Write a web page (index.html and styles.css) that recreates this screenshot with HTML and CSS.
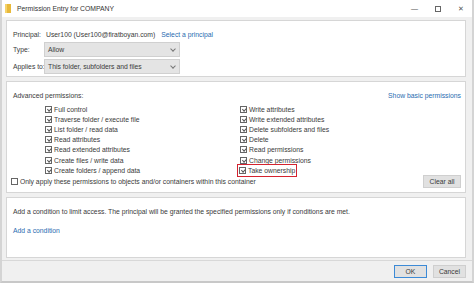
FILE: index.html
```html
<!DOCTYPE html>
<html lang="en">
  <head>
    <link rel="stylesheet" href="styles.css">
    <title>Permission Entry for COMPANY</title>
  </head>
  <body>
    <div class="window">
      <div class="titlebar">
        <svg class="folder" width="6" height="9" viewBox="0 0 6 9">
          <rect x="0" y="0" width="6" height="9" fill="#e8b93a" />
          <rect x="0" y="0" width="2" height="9" fill="#f5d36b" />
        </svg>
        <span class="title">Permission Entry for COMPANY</span>
        <div class="controls">
          <span class="ctl">&#8212;</span>
          <span class="ctl"><span class="max"></span></span>
          <span class="ctl">&#10005;</span>
        </div>
      </div>

      <div class="content">
        <div class="panel top-panel">
          <div class="field-row">
            <span class="label">Principal:</span>
            <span class="value">User100 (User100@firatboyan.com)</span>
            <a class="link">Select a principal</a>
          </div>
          <div class="field-row">
            <span class="label">Type:</span>
            <div class="select">Allow<span class="chev"></span></div>
          </div>
          <div class="field-row">
            <span class="label">Applies to:</span>
            <div class="select">This folder, subfolders and files<span class="chev"></span></div>
          </div>
        </div>

        <div class="panel perm-panel">
          <div class="perm-head">
            <span>Advanced permissions:</span>
            <a class="link">Show basic permissions</a>
          </div>
          <div class="perm-cols">
            <div class="perm-col left-col">
              <div class="check"><span class="box on"></span>Full control</div>
              <div class="check"><span class="box on"></span>Traverse folder / execute file</div>
              <div class="check"><span class="box on"></span>List folder / read data</div>
              <div class="check"><span class="box on"></span>Read attributes</div>
              <div class="check"><span class="box on"></span>Read extended attributes</div>
              <div class="check"><span class="box on"></span>Create files / write data</div>
              <div class="check"><span class="box on"></span>Create folders / append data</div>
            </div>
            <div class="perm-col right-col">
              <div class="check"><span class="box on"></span>Write attributes</div>
              <div class="check"><span class="box on"></span>Write extended attributes</div>
              <div class="check"><span class="box on"></span>Delete subfolders and files</div>
              <div class="check"><span class="box on"></span>Delete</div>
              <div class="check"><span class="box on"></span>Read permissions</div>
              <div class="check"><span class="box on"></span>Change permissions</div>
              <div class="check marked"><span class="box on"></span>Take ownership</div>
            </div>
          </div>
          <div class="perm-foot">
            <div class="check"><span class="box"></span>Only apply these permissions to objects and/or containers within this container</div>
            <div class="btn">Clear all</div>
          </div>
        </div>

        <div class="panel cond-panel">
          <p class="cond-text">Add a condition to limit access. The principal will be granted the specified permissions only if conditions are met.</p>
          <a class="link">Add a condition</a>
        </div>
      </div>

      <div class="footer">
        <div class="btn default">OK</div>
        <div class="btn">Cancel</div>
      </div>
    </div>
  </body>
</html>
```

FILE: styles.css
```css
html, body {
  margin: 0;
  padding: 0;
}
body {
  width: 474px;
  height: 283px;
  overflow: hidden;
  background: #f0f0f0;
  font-family: "Liberation Sans", Arial, sans-serif;
  font-size: 6.8px;
  color: #3a3a3a;
}
.window {
  height: 281px;
  border-left: 2px solid #d4d4d4;
  border-right: 2px solid #d4d4d4;
  border-bottom: 2px solid #c8c8c8;
  display: flex;
  flex-direction: column;
}
.titlebar {
  height: 17px;
  background: #fff;
  display: flex;
  align-items: center;
  padding-left: 3px;
}
.folder {
  margin-right: 6px;
}
.title {
  color: #333;
}
.controls {
  margin-left: auto;
  display: flex;
  height: 100%;
}
.ctl {
  width: 23px;
  display: flex;
  align-items: center;
  justify-content: center;
  color: #555;
  font-size: 7px;
}
.max {
  width: 6px;
  height: 6px;
  border: 1px solid #666;
  box-sizing: border-box;
}

.content {
  padding: 3px 6px 0 4px;
  display: flex;
  flex-direction: column;
  gap: 4px;
}
.panel {
  background: #fff;
  border: 1px solid #d6d6d6;
}
.top-panel {
  height: 57px;
  box-sizing: border-box;
  padding: 7px 0 0 6px;
  display: flex;
  flex-direction: column;
  gap: 2px;
}
.field-row {
  display: flex;
  align-items: center;
  min-height: 12px;
}
.label {
  width: 31px;
  flex: none;
  white-space: nowrap;
}
.value {
  margin-left: 2px;
  margin-right: 6px;
}
.link {
  color: #2b6cb0;
}
.select {
  width: 136px;
  height: 15px;
  box-sizing: border-box;
  background: #e4e4e4;
  border: 1px solid #d0d0d0;
  display: flex;
  align-items: center;
  padding-left: 3px;
  position: relative;
}
.chev {
  position: absolute;
  right: 4px;
  top: 4px;
  width: 3px;
  height: 3px;
  border-right: 1px solid #777;
  border-bottom: 1px solid #777;
  transform: rotate(45deg);
}

.perm-panel {
  height: 112px;
  box-sizing: border-box;
  padding: 9px 4px 0 6px;
}
.perm-head {
  display: flex;
  justify-content: space-between;
  height: 8px;
  align-items: center;
}
.perm-cols {
  display: flex;
  margin-top: 5px;
}
.left-col {
  margin-left: 32px;
  width: 195px;
}
.check {
  display: flex;
  align-items: center;
  height: 10.2px;
  white-space: nowrap;
}
.box {
  width: 7px;
  height: 7px;
  box-sizing: border-box;
  border: 1px solid #666;
  margin-right: 2px;
  position: relative;
  flex: none;
}
.box.on::after {
  content: "";
  position: absolute;
  left: 1.5px;
  top: 0;
  width: 1.5px;
  height: 3px;
  border-right: 1px solid #555;
  border-bottom: 1px solid #555;
  transform: rotate(45deg);
}
.marked {
  width: fit-content;
  outline: 1.5px solid #d4232f;
  padding: 0 1px 0 1px;
  margin-left: -2px;
  height: 11px;
}
.perm-foot {
  display: flex;
  align-items: center;
  justify-content: space-between;
  margin-left: -2px;
  margin-top: -1px;
}
.btn {
  height: 13px;
  width: 38px;
  box-sizing: border-box;
  background: #e1e1e1;
  border: 1px solid #cfcfcf;
  display: flex;
  align-items: center;
  justify-content: center;
}
.cond-panel {
  height: 61px;
  box-sizing: border-box;
  padding: 10px 6px 0 6px;
}
.cond-text {
  margin: 0 0 12px 0;
}

.footer {
  margin-top: auto;
  height: 20px;
  border-top: 1px solid #d8d8d8;
  display: flex;
  justify-content: flex-end;
  align-items: center;
  gap: 6px;
  padding-right: 6px;
  background: #f0f0f0;
}
.footer .btn {
  width: 33px;
}
.footer .default {
  border: 1px solid #3c8ad6;
}
```
